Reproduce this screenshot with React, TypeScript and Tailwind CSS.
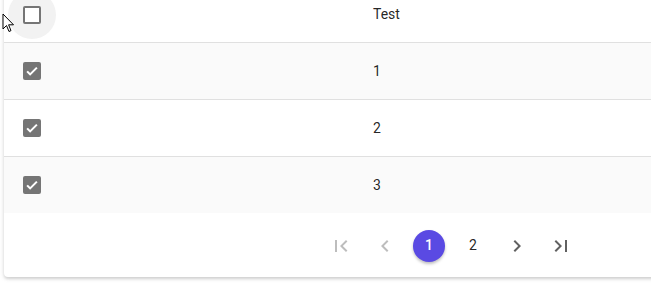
import React from "react";

const rows = ["1", "2", "3"];

function Icon({ d, className }: { d: string; className: string }) {
  return (
    <svg viewBox="0 0 24 24" width={24} height={24} className={className} fill="currentColor">
      <path d={d} />
    </svg>
  );
}

function Checkbox({ checked }: { checked: boolean }) {
  if (!checked) {
    return <div className="h-[18px] w-[18px] rounded-[2px] border-2 border-[#757575] bg-white" />;
  }
  return (
    <div className="flex h-[18px] w-[18px] items-center justify-center rounded-[2px] bg-[#757575]">
      <svg viewBox="0 0 24 24" width={18} height={18} fill="none" stroke="white" strokeWidth={2.8}>
        <path d="M5.5 12.5l4 4 9-9" />
      </svg>
    </div>
  );
}

export default function App() {
  return (
    <div
      className="relative h-[292px] w-full overflow-hidden bg-white"
      style={{ fontFamily: "Roboto, 'Liberation Sans', sans-serif" }}
    >
      <div className="ml-[4px] -mt-[13px] w-[680px] rounded-[4px] bg-white shadow-[0_2px_3px_rgba(0,0,0,0.14),0_1px_6px_rgba(0,0,0,0.08)]">
        {/* header */}
        <div className="flex h-[56px] items-center border-b border-[#e0e0e0]">
          <div className="relative flex w-[369px] items-center pl-[19px]">
            <div className="absolute left-[4px] top-1/2 h-[48px] w-[48px] -translate-y-1/2 rounded-full bg-[#f2f2f2]" />
            <div className="relative">
              <Checkbox checked={false} />
            </div>
          </div>
          <div className="text-[14px] text-[rgba(0,0,0,0.87)]">Test</div>
        </div>
        {rows.map((r, i) => (
          <div
            key={r}
            className={`flex items-center ${i < rows.length - 1 ? "h-[57px] border-b border-[#e0e0e0]" : "h-[56px]"} ${i % 2 === 0 ? "bg-[#fafafa]" : "bg-white"}`}
          >
            <div className="flex w-[369px] items-center pl-[19px]">
              <Checkbox checked />
            </div>
            <div className="text-[14px] text-[rgba(0,0,0,0.87)]">{r}</div>
          </div>
        ))}
        {/* pagination */}
        <div className="flex h-[64px] items-center pl-[315px] pt-[1px]">
          <button className="flex h-[44px] w-[44px] items-center justify-center">
            <Icon className="text-[#bdbdbd]" d="M18.41 16.59L13.82 12l4.59-4.59L17 6l-6 6 6 6zM6 6h2v12H6z" />
          </button>
          <button className="flex h-[44px] w-[44px] items-center justify-center">
            <Icon className="text-[#bdbdbd]" d="M15.41 7.41L14 6l-6 6 6 6 1.41-1.41L10.83 12z" />
          </button>
          <button className="flex h-[44px] w-[44px] items-center justify-center">
            <span className="flex h-[32px] w-[32px] items-center justify-center rounded-full bg-[#5a4ae3] text-[14px] font-medium text-white shadow-[0_2px_3px_rgba(0,0,0,0.25)]">
              1
            </span>
          </button>
          <button className="flex h-[44px] w-[44px] items-center justify-center">
            <span className="text-[14px] text-[rgba(0,0,0,0.87)]">2</span>
          </button>
          <button className="flex h-[44px] w-[44px] items-center justify-center">
            <Icon className="text-[#616161]" d="M10 6L8.59 7.41 13.17 12l-4.58 4.59L10 18l6-6z" />
          </button>
          <button className="flex h-[44px] w-[44px] items-center justify-center">
            <Icon className="text-[#616161]" d="M5.59 7.41L10.18 12l-4.59 4.59L7 18l6-6-6-6zM16 6h2v12h-2z" />
          </button>
        </div>
      </div>
      {/* mouse cursor */}
      <svg className="absolute left-[2px] top-[13px]" width={14} height={21} viewBox="0 0 14 21">
        <path d="M1 1 L1 16 L4.5 12.5 L7 18.5 L9 17.6 L6.6 11.8 L11.5 11.8 Z" fill="white" stroke="black" strokeWidth={1} strokeLinejoin="round" />
      </svg>
    </div>
  );
}
